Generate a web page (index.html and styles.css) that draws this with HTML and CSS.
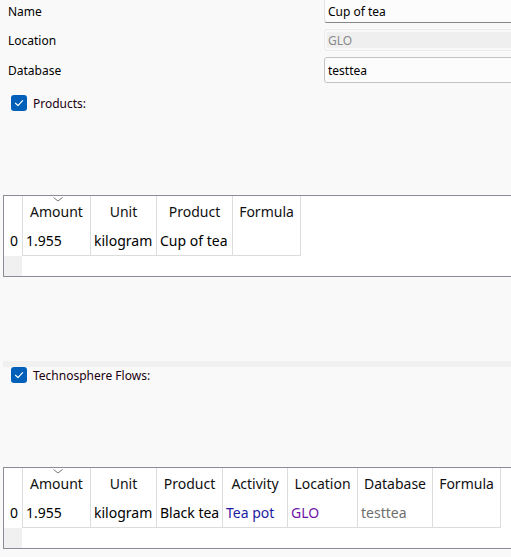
FILE: index.html
```html
<!DOCTYPE html>
<html>
<head>
<meta charset="utf-8">
<link rel="stylesheet" href="styles.css">
</head>
<body>
<div class="page">
  <div class="form">
    <div class="frow r1">
      <span class="label">Name</span>
      <div class="input name">Cup of tea</div>
    </div>
    <div class="frow r2">
      <span class="label">Location</span>
      <div class="input disabled"><span class="inner">GLO</span></div>
    </div>
    <div class="frow r3">
      <span class="label">Database</span>
      <div class="input db">testtea</div>
    </div>
  </div>

  <div class="check c1">
    <span class="box"><svg width="16" height="16" viewBox="0 0 16 16"><path d="M4.5 8.2 L7 10.6 L11.6 5.6" fill="none" stroke="#fff" stroke-width="1.2" stroke-linecap="round" stroke-linejoin="round"/></svg></span>
    <span class="clabel">Products:</span>
  </div>

  <div class="tframe t1">
    <div class="grid g1">
      <div class="cell corner"></div>
      <div class="cell hdr"><svg class="sort" width="10" height="5" viewBox="0 0 10 5"><path d="M0.5 0.5 L5 4 L9.5 0.5" fill="none" stroke="#7a7a7a" stroke-width="1"/></svg>Amount</div>
      <div class="cell hdr">Unit</div>
      <div class="cell hdr">Product</div>
      <div class="cell hdr">Formula</div>

      <div class="cell rowh">0</div>
      <div class="cell data">1.955</div>
      <div class="cell data">kilogram</div>
      <div class="cell data">Cup of tea</div>
      <div class="cell data"></div>
    </div>
    <div class="empty"><div class="emptyh"></div></div>
  </div>

  <div class="band"></div>

  <div class="check c2">
    <span class="box"><svg width="16" height="16" viewBox="0 0 16 16"><path d="M4.5 8.2 L7 10.6 L11.6 5.6" fill="none" stroke="#fff" stroke-width="1.2" stroke-linecap="round" stroke-linejoin="round"/></svg></span>
    <span class="clabel">Technosphere Flows:</span>
  </div>

  <div class="tframe t2">
    <div class="grid g2">
      <div class="cell corner"></div>
      <div class="cell hdr"><svg class="sort" width="10" height="5" viewBox="0 0 10 5"><path d="M0.5 0.5 L5 4 L9.5 0.5" fill="none" stroke="#7a7a7a" stroke-width="1"/></svg>Amount</div>
      <div class="cell hdr">Unit</div>
      <div class="cell hdr">Product</div>
      <div class="cell hdr">Activity</div>
      <div class="cell hdr">Location</div>
      <div class="cell hdr">Database</div>
      <div class="cell hdr">Formula</div>

      <div class="cell rowh">0</div>
      <div class="cell data">1.955</div>
      <div class="cell data">kilogram</div>
      <div class="cell data">Black tea</div>
      <div class="cell data blue">Tea pot</div>
      <div class="cell data purple">GLO</div>
      <div class="cell data gray">testtea</div>
      <div class="cell data"></div>
    </div>
    <div class="empty"><div class="emptyh"></div></div>
  </div>
</div>
</body>
</html>
```

FILE: styles.css
```css
html, body {
  margin: 0;
  padding: 0;
  background: #f9f9f9;
  overflow: hidden;
}
body {
  width: 511px;
  height: 557px;
  font-family: "Noto Sans", "Open Sans", sans-serif;
  color: #000;
}
.page {
  display: flex;
  flex-direction: column;
}
.form {
  display: flex;
  flex-direction: column;
}
.frow {
  display: grid;
  grid-template-columns: 324px 1fr;
  align-items: center;
  font-size: 12px;
}
.label {
  padding-left: 8px;
}
.r1 { height: 23px; }
.r2 { height: 22px; margin-top: 6px; }
.r3 { height: 26px; margin-top: 6px; }
.input {
  box-sizing: border-box;
  font-size: 12px;
  padding-left: 3px;
  display: flex;
  align-items: center;
  width: 200px;
}
.name {
  height: 23px;
  background: #fcfcfc;
  border-bottom: 1px solid #868686;
  border-left: 1px solid #e4e4e4;
  border-radius: 0 0 0 3px;
  padding-left: 3px;
}
.disabled {
  height: 22px;
  border: 1px solid #ececec;
  border-radius: 3px;
  padding: 2px;
  background: #f9f9f9;
}
.disabled .inner {
  display: flex;
  align-items: center;
  background: #efefef;
  width: 100%;
  height: 100%;
  color: #8a8a8a;
  padding-left: 1px;
}
.db {
  height: 26px;
  background: #fcfcfc;
  border: 1px solid #c4c4c4;
  border-radius: 3px;
}
.check {
  display: flex;
  align-items: center;
  font-size: 12px;
  height: 16px;
  padding-left: 11px;
}
.c1 { margin-top: 12px; }
.box {
  width: 16px;
  height: 16px;
  border-radius: 3px;
  background: #005fb8;
  display: flex;
}
.clabel {
  margin-left: 6px;
  color: #1a0010;
}
.tframe {
  margin-left: 3px;
  width: 530px;
  box-sizing: border-box;
  border: 1px solid #8c8c94;
  height: 82px;
  background: #fff;
  display: flex;
  flex-direction: column;
}
.t1 { margin-top: 84px; }
.t2 { margin-top: 84px; }
.grid {
  display: grid;
  grid-template-rows: 30px 30px;
  align-self: flex-start;
}
.g1 { grid-template-columns: 19px 68px 66px 76px 68px; }
.g2 { grid-template-columns: 19px 68px 66px 66px 65px 70px 75px 68px; }
.cell {
  box-sizing: border-box;
  font-size: 14px;
  display: flex;
  align-items: center;
  white-space: nowrap;
  overflow: hidden;
  border-right: 1px solid #dcdcdc;
}
.hdr {
  justify-content: center;
  position: relative;
  padding-top: 1px;
  color: #101010;
}
.sort {
  position: absolute;
  top: 1px;
  left: 30px;
}
.data {
  padding-left: 3px;
  padding-bottom: 1px;
  border-bottom: 1px solid #dcdcdc;
}
.rowh {
  justify-content: center;
  padding-left: 2px;
  padding-bottom: 1px;
  border-bottom: none;
}
.blue { color: #1c1ca0; }
.purple { color: #7014a8; }
.gray { color: #6e6e6e; }
.empty {
  flex: 1;
  display: flex;
}
.emptyh {
  width: 18px;
  background: #f0f0f0;
}
.band {
  margin-top: 84px;
  margin-left: 3px;
  height: 6px;
  background: #f0f0f0;
}
.c2 { margin-top: 0px; }
```
